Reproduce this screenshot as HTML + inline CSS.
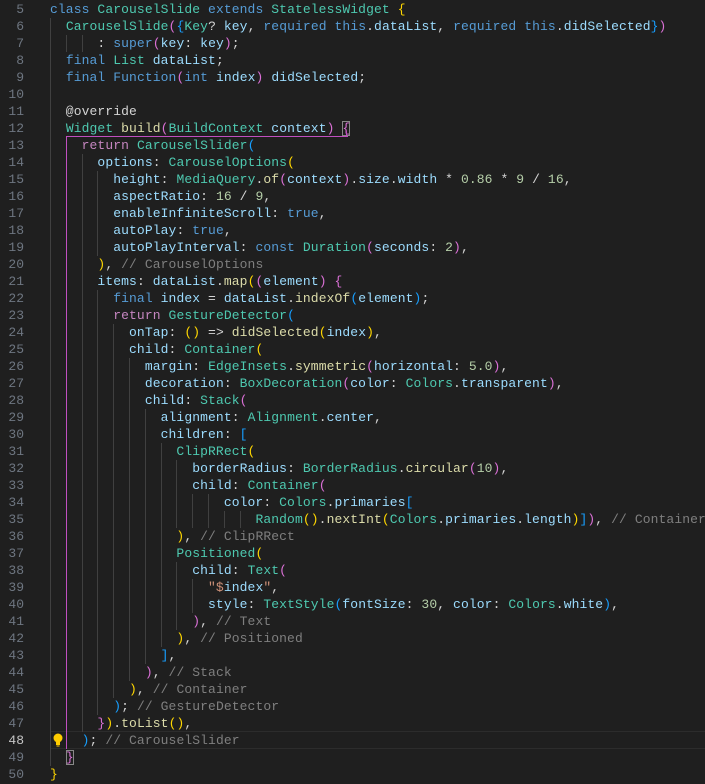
<!DOCTYPE html>
<html><head><meta charset="utf-8"><style>
html,body{margin:0;padding:0;background:#1f1f1f;width:705px;height:784px;overflow:hidden}
#ed{position:relative;width:705px;height:784px;font-family:"Liberation Mono",monospace;font-size:13px;color:#d4d4d4}
.ln{position:absolute;left:0;width:24px;text-align:right;color:#6e7681;height:17px;line-height:17px}
.cl{position:absolute;left:50px;height:17px;line-height:17px;white-space:pre;letter-spacing:0.1px}
.g{position:absolute;width:1px;height:17px;background:#404040}
.k{color:#569cd6}.t{color:#4ec9b0}.v{color:#9cdcfe}.f{color:#dcdcaa}.n{color:#b5cea8}.s{color:#ce9178}.c{color:#7f7f7f}.r{color:#c586c0}
.y{color:#ffd700}.p{color:#da70d6}.b{color:#179fff}
</style></head><body><div id="ed"></div>
<script>
(function(){
var L=[
'<span class="k">class</span> <span class="t">CarouselSlide</span> <span class="k">extends</span> <span class="t">StatelessWidget</span> <span class="y">{</span>',
'  <span class="t">CarouselSlide</span><span class="p">(</span><span class="b">{</span><span class="t">Key</span>? <span class="v">key</span>, <span class="k">required</span> <span class="k">this</span>.<span class="v">dataList</span>, <span class="k">required</span> <span class="k">this</span>.<span class="v">didSelected</span><span class="b">}</span><span class="p">)</span>',
'      : <span class="k">super</span><span class="p">(</span><span class="v">key</span>: <span class="v">key</span><span class="p">)</span>;',
'  <span class="k">final</span> <span class="t">List</span> <span class="v">dataList</span>;',
'  <span class="k">final</span> <span class="k">Function</span><span class="p">(</span><span class="k">int</span> <span class="v">index</span><span class="p">)</span> <span class="v">didSelected</span>;',
'',
'  @override',
'  <span class="t">Widget</span> <span class="f">build</span><span class="p">(</span><span class="t">BuildContext</span> <span class="v">context</span><span class="p">)</span> <span class="p" style="outline:1px solid #888;outline-offset:-1px">{</span>',
'    <span class="r">return</span> <span class="t">CarouselSlider</span><span class="b">(</span>',
'      <span class="v">options</span>: <span class="t">CarouselOptions</span><span class="y">(</span>',
'        <span class="v">height</span>: <span class="t">MediaQuery</span>.<span class="f">of</span><span class="p">(</span><span class="v">context</span><span class="p">)</span>.<span class="v">size</span>.<span class="v">width</span> * <span class="n">0.86</span> * <span class="n">9</span> / <span class="n">16</span>,',
'        <span class="v">aspectRatio</span>: <span class="n">16</span> / <span class="n">9</span>,',
'        <span class="v">enableInfiniteScroll</span>: <span class="k">true</span>,',
'        <span class="v">autoPlay</span>: <span class="k">true</span>,',
'        <span class="v">autoPlayInterval</span>: <span class="k">const</span> <span class="t">Duration</span><span class="p">(</span><span class="v">seconds</span>: <span class="n">2</span><span class="p">)</span>,',
'      <span class="y">)</span>, <span class="c">// CarouselOptions</span>',
'      <span class="v">items</span>: <span class="v">dataList</span>.<span class="f">map</span><span class="y">(</span><span class="p">(</span><span class="v">element</span><span class="p">)</span> <span class="p">{</span>',
'        <span class="k">final</span> <span class="v">index</span> = <span class="v">dataList</span>.<span class="f">indexOf</span><span class="b">(</span><span class="v">element</span><span class="b">)</span>;',
'        <span class="r">return</span> <span class="t">GestureDetector</span><span class="b">(</span>',
'          <span class="v">onTap</span>: <span class="y">()</span> =&gt; <span class="f">didSelected</span><span class="y">(</span><span class="v">index</span><span class="y">)</span>,',
'          <span class="v">child</span>: <span class="t">Container</span><span class="y">(</span>',
'            <span class="v">margin</span>: <span class="t">EdgeInsets</span>.<span class="f">symmetric</span><span class="p">(</span><span class="v">horizontal</span>: <span class="n">5.0</span><span class="p">)</span>,',
'            <span class="v">decoration</span>: <span class="t">BoxDecoration</span><span class="p">(</span><span class="v">color</span>: <span class="t">Colors</span>.<span class="v">transparent</span><span class="p">)</span>,',
'            <span class="v">child</span>: <span class="t">Stack</span><span class="p">(</span>',
'              <span class="v">alignment</span>: <span class="t">Alignment</span>.<span class="v">center</span>,',
'              <span class="v">children</span>: <span class="b">[</span>',
'                <span class="t">ClipRRect</span><span class="y">(</span>',
'                  <span class="v">borderRadius</span>: <span class="t">BorderRadius</span>.<span class="f">circular</span><span class="p">(</span><span class="n">10</span><span class="p">)</span>,',
'                  <span class="v">child</span>: <span class="t">Container</span><span class="p">(</span>',
'                      <span class="v">color</span>: <span class="t">Colors</span>.<span class="v">primaries</span><span class="b">[</span>',
'                          <span class="t">Random</span><span class="y">()</span>.<span class="f">nextInt</span><span class="y">(</span><span class="t">Colors</span>.<span class="v">primaries</span>.<span class="v">length</span><span class="y">)</span><span class="b">]</span><span class="p">)</span>, <span class="c">// Container</span>',
'                <span class="y">)</span>, <span class="c">// ClipRRect</span>',
'                <span class="t">Positioned</span><span class="y">(</span>',
'                  <span class="v">child</span>: <span class="t">Text</span><span class="p">(</span>',
'                    <span class="s">"$</span><span class="v">index</span><span class="s">"</span>,',
'                    <span class="v">style</span>: <span class="t">TextStyle</span><span class="b">(</span><span class="v">fontSize</span>: <span class="n">30</span>, <span class="v">color</span>: <span class="t">Colors</span>.<span class="v">white</span><span class="b">)</span>,',
'                  <span class="p">)</span>, <span class="c">// Text</span>',
'                <span class="y">)</span>, <span class="c">// Positioned</span>',
'              <span class="b">]</span>,',
'            <span class="p">)</span>, <span class="c">// Stack</span>',
'          <span class="y">)</span>, <span class="c">// Container</span>',
'        <span class="b">)</span>; <span class="c">// GestureDetector</span>',
'      <span class="p">}</span><span class="y">)</span>.<span class="f">toList</span><span class="y">()</span>,',
'    <span class="b">)</span>; <span class="c">// CarouselSlider</span>',
'  <span class="p" style="outline:1px solid #888;outline-offset:-1px">}</span>',
'<span class="y">}</span>'
];
var W=7.9,ed=document.getElementById('ed'),h='';
h+='<div style="position:absolute;left:50px;right:0;top:731px;height:16px;border:1px solid #2c2c2c;border-right:none"></div>';
for(var i=0;i<L.length;i++){
 var yy=i*17+0.5,num=i+5;
 var txt=L[i].replace(/<[^>]+>/g,'');
 var ind=txt.match(/^ */)[0].length;
 if(num==10)ind=2;
 for(var c=0;c<ind;c+=2){
  var col=(c==2&&num>=13&&num<=48)?'#c04fc0':'#404040';
  h+='<div class="g" style="left:'+(50+c*W)+'px;top:'+yy+'px;background:'+col+'"></div>';
 }
 h+='<div class="ln" style="top:'+yy+'px;'+(num==48?'color:#c6c6c6':'')+'">'+num+'</div>';
 h+='<div class="cl" style="top:'+yy+'px">'+L[i]+'</div>';
}
h+='<div style="position:absolute;left:'+(50+2*W)+'px;top:136px;width:'+(36*W-2)+'px;height:1px;background:#c04fc0"></div>';
h+='<div style="position:absolute;left:'+(50+2*W+35*W+W/2)+'px;top:131px;width:1px;height:6px;background:#c04fc0"></div>';
h+='<svg style="position:absolute;left:52px;top:732px" width="12" height="16" viewBox="0 0 12 16"><circle cx="6" cy="6" r="4.5" fill="#ffcc00"/><rect x="4" y="10" width="4" height="3" fill="#ffcc00"/><rect x="4.5" y="13.5" width="3" height="1" fill="#ffcc00"/></svg>';
ed.innerHTML=h;
})();
</script></body></html>
